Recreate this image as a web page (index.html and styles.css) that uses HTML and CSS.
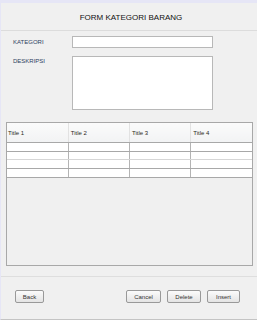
FILE: index.html
```html
<!DOCTYPE html>
<html>
<head>
<meta charset="utf-8">
<link rel="stylesheet" href="styles.css">
</head>
<body>
<div class="frame">
  <div class="header"><span class="title">FORM KATEGORI BARANG</span></div>
  <div class="form">
    <div class="row row-kategori">
      <label class="label">KATEGORI</label>
      <div class="input"></div>
    </div>
    <div class="row row-deskripsi">
      <label class="label label-top">DESKRIPSI</label>
      <div class="textarea"></div>
    </div>
    <div class="table-panel">
      <table class="grid">
        <thead>
          <tr><th>Title 1</th><th>Title 2</th><th>Title 3</th><th>Title 4</th></tr>
        </thead>
        <tbody>
          <tr><td></td><td></td><td></td><td></td></tr>
          <tr class="soft"><td></td><td></td><td></td><td></td></tr>
          <tr><td></td><td></td><td></td><td></td></tr>
          <tr><td></td><td></td><td></td><td></td></tr>
        </tbody>
      </table>
    </div>
  </div>
  <div class="buttons">
    <button class="btn btn-back">Back</button>
    <button class="btn btn-cancel">Cancel</button>
    <button class="btn btn-delete">Delete</button>
    <button class="btn btn-insert">Insert</button>
  </div>
</div>
</body>
</html>
```

FILE: styles.css
```css
html, body {
  margin: 0;
  padding: 0;
}
body {
  width: 257px;
  height: 320px;
  background: #f0f0f0;
  font-family: "Liberation Sans", Arial, sans-serif;
  overflow: hidden;
}
.frame {
  box-sizing: border-box;
  width: 257px;
  height: 320px;
  border-top: 3px solid #e6e6f6;
  border-left: 1px solid #e6e6f6;
  border-bottom: 1px solid #c4c4c4;
  display: flex;
  flex-direction: column;
}
.header {
  height: 27px;
  border-bottom: 1px solid #dcdcdc;
  display: flex;
  align-items: center;
  justify-content: center;
}
.title {
  font-size: 8px;
  color: #111;
  padding-left: 4px;
  padding-top: 1px;
}
.form {
  border-bottom: 1px solid #dedede;
  padding-bottom: 10px;
}
.row {
  display: flex;
  padding-left: 12px;
}
.row-kategori {
  margin-top: 5px;
  align-items: center;
}
.row-deskripsi {
  margin-top: 8px;
  align-items: flex-start;
}
.label {
  width: 59px;
  font-size: 6px;
  line-height: 8px;
  color: #2e4060;
}
.label-top {
  padding-top: 1px;
}
.input {
  box-sizing: border-box;
  width: 141px;
  height: 12px;
  background: #fff;
  border: 1px solid #b8b8b8;
}
.textarea {
  box-sizing: border-box;
  width: 141px;
  height: 54px;
  background: #fff;
  border: 1px solid #b8b8b8;
}
.table-panel {
  box-sizing: border-box;
  margin-top: 12px;
  margin-left: 5px;
  width: 247px;
  height: 144px;
  border: 1px solid #a8a8a8;
  background: #f0f0f0;
}
.grid {
  width: 100%;
  border-collapse: collapse;
  table-layout: fixed;
}
.grid th {
  height: 19px;
  padding: 0 0 0 2px;
  text-align: left;
  font-weight: normal;
  font-size: 6px;
  color: #2a2a1a;
  background: linear-gradient(#fbfbfb, #f2f3f4);
  border-right: 1px solid #e2e2e2;
  border-bottom: 1px solid #a8a8a8;
}
.grid th:first-child {
  padding-left: 1px;
}
.grid th:last-child {
  border-right: none;
}
.grid td {
  height: 8px;
  padding: 0;
  background: #fff;
  border-right: 1px solid #b4b4b4;
  border-bottom: 1px solid #a8a8a8;
}
.grid tr.soft td {
  height: 7px;
  border-bottom: 1px solid #d6d6d6;
}
.grid td:last-child {
  border-right: none;
}
.buttons {
  display: flex;
  align-items: flex-start;
  margin-top: 13px;
  padding-left: 14px;
  padding-right: 17px;
  gap: 6px;
}
.btn {
  box-sizing: border-box;
  height: 13px;
  padding: 0;
  margin: 0;
  font-family: "Liberation Sans", Arial, sans-serif;
  font-size: 6px;
  color: #333;
  background: linear-gradient(#fbfbfb, #e4e4e4);
  border: 1px solid #999;
  border-radius: 2px;
}
.btn-back { width: 29px; }
.btn-cancel { width: 35px; margin-left: auto; }
.btn-delete { width: 34px; }
.btn-insert { width: 33px; }
```
